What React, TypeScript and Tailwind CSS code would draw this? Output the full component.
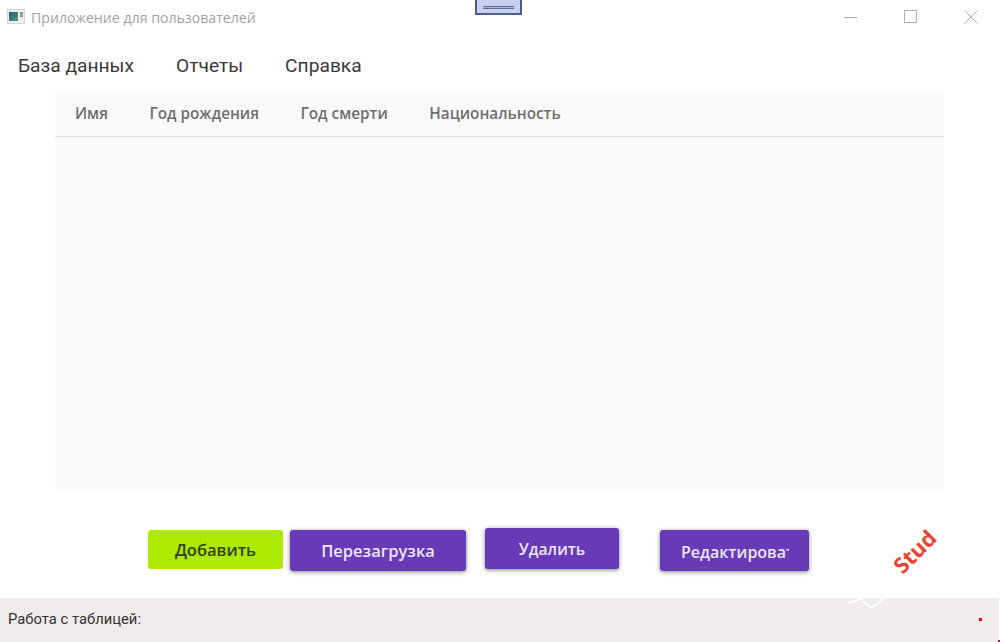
export default function App() {
  return (
    <div className="relative flex h-[642px] w-[1000px] flex-col overflow-hidden bg-white font-['Roboto',sans-serif]">
      {/* docked tab at top */}
      <div className="absolute left-[475px] top-0 flex h-[15px] w-[47px] items-end justify-center border-2 border-t-0 border-[#4f5a8c] bg-[#c5d0ee] pb-[4px]">
        <div className="h-[3px] w-[31px] border-y border-[#5f6a96] bg-[#aab3d4]" />
      </div>

      {/* title bar */}
      <div className="flex h-[35px] shrink-0 items-center pl-[7px]">
        <svg width="18" height="15" viewBox="0 0 18 15" className="mb-[2px]">
          <rect x="0" y="0" width="18" height="15" fill="#d4d6d6" />
          <rect x="1" y="1" width="16" height="13" fill="#eeeeee" />
          <defs>
            <linearGradient id="ic" x1="0" y1="0" x2="1" y2="1">
              <stop offset="0" stopColor="#2c5a7a" />
              <stop offset="1" stopColor="#4f9c76" />
            </linearGradient>
          </defs>
          <rect x="2" y="3" width="9" height="9" fill="url(#ic)" />
          <rect x="13" y="3" width="3" height="5" fill="#8f9a9a" />
        </svg>
        <span className="ml-[6px] font-['Open_Sans',sans-serif] text-[14.15px] text-[#a3a3a3]">Приложение для пользователей</span>
        <div className="ml-auto mb-[2px] flex h-full items-center">
          <svg width="16" height="16" viewBox="0 0 16 16" className="mr-[44px]">
            <path d="M1 8.5H14" stroke="#a8a8a8" strokeWidth="1" />
          </svg>
          <svg width="16" height="16" viewBox="0 0 16 16" className="mr-[44px]">
            <rect x="1.5" y="1.5" width="12" height="12" fill="none" stroke="#b0b0b0" strokeWidth="1" />
          </svg>
          <svg width="16" height="16" viewBox="0 0 16 16" className="mr-[21px]">
            <path d="M1.5 1.5L14.5 14.5M14.5 1.5L1.5 14.5" stroke="#b0b0b0" strokeWidth="1" fill="none" />
          </svg>
        </div>
      </div>

      {/* menu */}
      <div className="flex h-[54px] shrink-0 items-center gap-[42px] pt-[9px] pl-[18px] text-[19.2px] text-[#3a3a3a]">
        <span>База данных</span>
        <span>Отчеты</span>
        <span>Справка</span>
      </div>

      {/* table */}
      <div className="ml-[55px] flex h-[401px] w-[889px] shrink-0 flex-col rounded-[6px] bg-[#fafafa]">
        <div className="flex h-[48px] shrink-0 items-center gap-[41.5px] border-b border-[#dcdcdc] pl-[20px] pt-[2px] font-['Open_Sans',sans-serif] text-[15.3px] font-semibold text-[#6e6e6e]">
          <span>Имя</span>
          <span>Год рождения</span>
          <span>Год смерти</span>
          <span>Национальность</span>
        </div>
      </div>

      {/* buttons */}
      <div className="flex h-[108px] shrink-0 items-start pl-[148px] pt-[40px] font-['Open_Sans',sans-serif] text-[16.5px] font-semibold">
        <button className="flex h-[39px] w-[135px] items-center justify-center rounded-[3px] bg-[#aeea00] pt-[1px] text-[#33401a]">Добавить</button>
        <button className="ml-[7px] flex h-[41px] w-[176px] items-center justify-center rounded-[3px] bg-[#673ab7] pt-[2px] text-[#ece6f6] shadow-[0_1px_4px_rgba(0,0,0,0.5)]">Перезагрузка</button>
        <button className="ml-[19px] mt-[-2px] flex h-[41px] w-[134px] items-center justify-center rounded-[3px] bg-[#673ab7] pt-[3px] text-[15.7px] text-[#ece6f6] shadow-[0_1px_4px_rgba(0,0,0,0.5)]">Удалить</button>
        <button className="ml-[41px] flex h-[41px] w-[149px] items-center rounded-[3px] bg-[#673ab7] pl-[21px] pt-[2px] text-[16px] text-[#ece6f6] shadow-[0_1px_4px_rgba(0,0,0,0.5)]">
          <span className="block w-[108px] overflow-hidden whitespace-nowrap">Редактировать</span>
        </button>
      </div>

      {/* status bar */}
      <div className="flex h-[44px] w-[999px] shrink-0 items-center bg-[#f0ecec] pb-[1px] pl-[8px] text-[14.8px] text-[#333333]">
        Работа с таблицей:
      </div>

      {/* watermark */}
      <div className="absolute left-[889px] top-[540px] -rotate-45 font-['Open_Sans',sans-serif] text-[22px] font-bold leading-none text-[#e8442e]">Stud</div>
      <svg width="60" height="50" viewBox="0 0 60 50" className="absolute left-[845px] top-[560px]" fill="none" stroke="#ffffff" strokeWidth="2">
        <path d="M3 43 L18 38" />
        <path d="M18 41 L25 47 Q33 47 45 30" />
      </svg>
      <div className="absolute left-[979px] top-[618px] h-[3px] w-[3px] bg-[#ff0000]" />
      <div className="absolute left-[998px] top-[640px] h-[2px] w-[2px] bg-[#ff0000]" />
    </div>
  );
}
